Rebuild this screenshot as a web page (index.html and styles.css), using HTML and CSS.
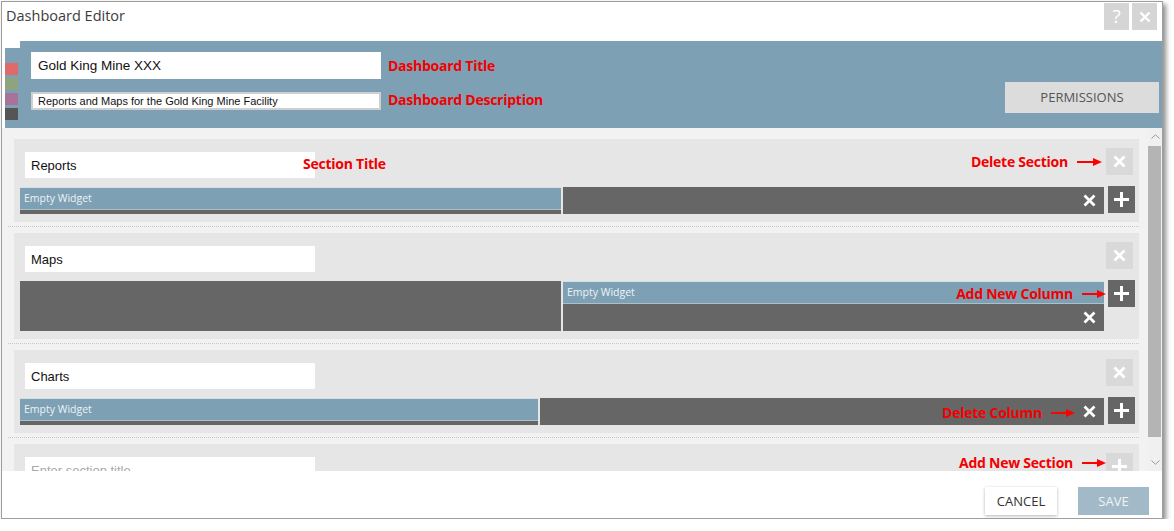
FILE: index.html
```html
<!DOCTYPE html>
<html>
<head>
<meta charset="utf-8">
<title>Dashboard Editor</title>
<link rel="stylesheet" href="styles.css">
</head>
<body>
<div class="dialog">
  <div class="titlebar">
    <div class="title">Dashboard Editor</div>
    <div class="tb-btns">
      <div class="tb-btn tb-help">?</div>
      <div class="tb-btn"><svg width="12" height="12" viewBox="0 0 12 12"><path d="M1.5 1.5L10.5 10.5M10.5 1.5L1.5 10.5" stroke="#fff" stroke-width="2.4" fill="none"/></svg></div>
    </div>
  </div>

  <div class="props">
    <div class="swatch-tab">
      <div class="swatch sw-red"></div>
      <div class="swatch sw-green"></div>
      <div class="swatch sw-purple"></div>
      <div class="swatch sw-dark"></div>
    </div>
    <div class="props-main">
      <div class="props-fields">
        <div class="field-row">
          <div class="inp inp-title">Gold King Mine XXX</div>
          <span class="note-inline">Dashboard Title</span>
        </div>
        <div class="field-row row-desc">
          <div class="inp inp-desc">Reports and Maps for the Gold King Mine Facility</div>
          <span class="note-inline note-desc">Dashboard Description</span>
        </div>
      </div>
      <div class="perm-btn">PERMISSIONS</div>
    </div>
  </div>

  <div class="body">
    <div class="sections">
      <div class="sec-wrap">
        <div class="section">
          <div class="sec-head">
            <div class="sec-inp">Reports</div>
            <div class="icon-btn light"><svg width="13" height="13" viewBox="0 0 13 13"><path d="M1.5 1.5L11.5 11.5M11.5 1.5L1.5 11.5" stroke="#fff" stroke-width="2.8" fill="none"/></svg></div>
          </div>
          <div class="wrow">
            <div class="cols">
              <div class="col w541 h27">
                <div class="widget">Empty Widget</div>
                <div class="rest"></div>
              </div>
              <div class="col grow h27">
                <div class="rest"><svg class="x" width="13" height="13" viewBox="0 0 13 13"><path d="M1.5 1.5L11.5 11.5M11.5 1.5L1.5 11.5" stroke="#fff" stroke-width="2.8" fill="none"/></svg></div>
              </div>
            </div>
            <div class="icon-btn dark add"><svg width="17" height="17" viewBox="0 0 17 17"><path d="M8.5 1V16M1 8.5H16" stroke="#fff" stroke-width="3" fill="none"/></svg></div>
          </div>
          <div class="note note-sectitle">Section Title</div>
          <div class="note note-delsec">Delete Section<svg width="25" height="8" viewBox="0 0 25 8"><path d="M0 4H18" stroke="#f00" stroke-width="2"/><path d="M16 0L25 4L16 8Z" fill="#f00"/></svg></div>
        </div>
      </div>

      <div class="sec-wrap">
        <div class="section">
          <div class="sec-head">
            <div class="sec-inp">Maps</div>
            <div class="icon-btn light"><svg width="13" height="13" viewBox="0 0 13 13"><path d="M1.5 1.5L11.5 11.5M11.5 1.5L1.5 11.5" stroke="#fff" stroke-width="2.8" fill="none"/></svg></div>
          </div>
          <div class="wrow">
            <div class="cols">
              <div class="col w541 h50"></div>
              <div class="col grow h50">
                <div class="widget">Empty Widget</div>
                <div class="rest"><svg class="x" width="13" height="13" viewBox="0 0 13 13"><path d="M1.5 1.5L11.5 11.5M11.5 1.5L1.5 11.5" stroke="#fff" stroke-width="2.8" fill="none"/></svg></div>
              </div>
            </div>
            <div class="icon-btn dark add"><svg width="17" height="17" viewBox="0 0 17 17"><path d="M8.5 1V16M1 8.5H16" stroke="#fff" stroke-width="3" fill="none"/></svg></div>
          </div>
          <div class="note note-addcol">Add New Column<svg width="24" height="8" viewBox="0 0 24 8"><path d="M0 4H17" stroke="#f00" stroke-width="2"/><path d="M15 0L24 4L15 8Z" fill="#f00"/></svg></div>
        </div>
      </div>

      <div class="sec-wrap">
        <div class="section">
          <div class="sec-head">
            <div class="sec-inp">Charts</div>
            <div class="icon-btn light"><svg width="13" height="13" viewBox="0 0 13 13"><path d="M1.5 1.5L11.5 11.5M11.5 1.5L1.5 11.5" stroke="#fff" stroke-width="2.8" fill="none"/></svg></div>
          </div>
          <div class="wrow">
            <div class="cols">
              <div class="col w518 h27">
                <div class="widget">Empty Widget</div>
                <div class="rest"></div>
              </div>
              <div class="col grow h27">
                <div class="rest"><svg class="x" width="13" height="13" viewBox="0 0 13 13"><path d="M1.5 1.5L11.5 11.5M11.5 1.5L1.5 11.5" stroke="#fff" stroke-width="2.8" fill="none"/></svg></div>
              </div>
            </div>
            <div class="icon-btn dark add"><svg width="17" height="17" viewBox="0 0 17 17"><path d="M8.5 1V16M1 8.5H16" stroke="#fff" stroke-width="3" fill="none"/></svg></div>
          </div>
          <div class="note note-delcol">Delete Column<svg width="24" height="8" viewBox="0 0 24 8"><path d="M0 4H17" stroke="#f00" stroke-width="2"/><path d="M15 0L24 4L15 8Z" fill="#f00"/></svg></div>
        </div>
      </div>

      <div class="sec-wrap">
        <div class="section">
          <div class="sec-head">
            <div class="sec-inp placeholder">Enter section title</div>
            <div class="icon-btn light"><svg width="17" height="17" viewBox="0 0 17 17"><path d="M8.5 1V16M1 8.5H16" stroke="#fff" stroke-width="3" fill="none"/></svg></div>
          </div>
          <div class="note note-addsec">Add New Section<svg width="24" height="8" viewBox="0 0 24 8"><path d="M0 4H17" stroke="#f00" stroke-width="2"/><path d="M15 0L24 4L15 8Z" fill="#f00"/></svg></div>
        </div>
      </div>
    </div>

    <div class="scrollbar">
      <div class="sb-btn"><svg width="9" height="5" viewBox="0 0 9 5"><path d="M0.5 4.5L4.5 0.8L8.5 4.5" stroke="#9a9a9a" stroke-width="1" fill="none"/></svg></div>
      <div class="sb-track"><div class="sb-thumb"></div></div>
      <div class="sb-btn"><svg width="9" height="5" viewBox="0 0 9 5"><path d="M0.5 0.5L4.5 4.2L8.5 0.5" stroke="#9a9a9a" stroke-width="1" fill="none"/></svg></div>
    </div>
  </div>

  <div class="footer">
    <div class="btn btn-cancel">CANCEL</div>
    <div class="btn btn-save">SAVE</div>
  </div>
</div>
</body>
</html>
```

FILE: styles.css
```css
* { box-sizing: border-box; }

body {
  margin: 0;
  background: #fff;
  font-family: "Open Sans", "Liberation Sans", sans-serif;
}

.dialog {
  width: 1162px;
  height: 518px;
  margin: 1px 0 0 1px;
  border: 1px solid #9e9e9e;
  box-shadow: 3px 3px 5px rgba(0, 0, 0, 0.45);
  background: #fff;
  display: flex;
  flex-direction: column;
}

/* title bar */
.titlebar {
  height: 39px;
  flex: none;
  display: flex;
  justify-content: space-between;
  padding: 0 5px 0 4px;
}
.title {
  font-size: 14.5px;
  line-height: 27px;
  color: #3c3c3c;
}
.tb-btns {
  display: flex;
  gap: 3px;
  margin-top: 1px;
}
.tb-btn {
  width: 25px;
  height: 27px;
  background: #d5d5d5;
  color: #fff;
  display: flex;
  align-items: center;
  justify-content: center;
}
.tb-help {
  font-size: 19px;
  line-height: 27px;
}

/* dashboard properties */
.props {
  height: 87px;
  flex: none;
  display: flex;
  padding-left: 3px;
}
.swatch-tab {
  width: 15px;
  margin-top: 7px;
  background: #7da0b4;
  padding-top: 15px;
  display: flex;
  flex-direction: column;
  gap: 3px;
}
.swatch {
  width: 13px;
  height: 12px;
}
.sw-red { background: #e06a6a; }
.sw-green { background: #8ea47f; }
.sw-purple { background: #a8729b; }
.sw-dark { background: #555555; }

.props-main {
  flex: 1;
  background: #7da0b4;
  display: flex;
  justify-content: space-between;
  padding: 11px 3px 0 11px;
}
.field-row {
  display: flex;
  align-items: center;
  gap: 7px;
}
.row-desc { margin-top: 13px; }
.inp {
  width: 350px;
  background: #fff;
  font-family: "Liberation Sans", Arial, sans-serif;
  color: #111;
  white-space: nowrap;
}
.inp-title {
  height: 27px;
  font-size: 13.5px;
  line-height: 27px;
  padding-left: 7px;
}
.inp-desc {
  height: 18px;
  font-size: 11px;
  line-height: 14px;
  padding-left: 5px;
  border: 2px solid #cfcfcf;
}
.note-inline {
  color: #f20000;
  font-weight: 700;
  font-size: 14px;
  letter-spacing: -0.25px;
  white-space: nowrap;
}
.note-desc { margin-top: -3px; }
.perm-btn {
  align-self: flex-end;
  margin-bottom: 15px;
  width: 154px;
  height: 31px;
  background: #dcdcdc;
  color: #555;
  font-size: 13px;
  line-height: 31px;
  text-align: center;
}

/* scrollable body */
.body {
  height: 343px;
  flex: none;
  display: flex;
  background: #f2f2f2;
  overflow: hidden;
}
.sections {
  flex: 1;
  padding: 11px 9px 0 6px;
  overflow: hidden;
}
.sec-wrap {
  padding: 0 0 4px 6px;
  border-bottom: 1px dotted #c6c6c6;
  margin-bottom: 6px;
}
.section {
  position: relative;
  background: #e6e6e6;
  padding: 0 4px 8px 6px;
}
.sec-head {
  display: flex;
  align-items: flex-start;
}
.sec-inp {
  width: 290px;
  height: 26px;
  margin: 13px 0 0 5px;
  background: #fff;
  padding-left: 6px;
  font-family: "Liberation Sans", Arial, sans-serif;
  font-size: 13px;
  line-height: 27px;
  color: #111;
}
.sec-inp.placeholder { color: #a8a8a8; }

.icon-btn {
  width: 27px;
  height: 27px;
  display: flex;
  align-items: center;
  justify-content: center;
  flex: none;
}
.icon-btn.light {
  background: #d9d9d9;
  margin: 9px 2px 0 auto;
}
.icon-btn.dark { background: #666; }
.icon-btn.add {
  margin: -1px 0 0 4px;
}

/* widget rows */
.wrow {
  display: flex;
  align-items: flex-start;
  margin-top: 9px;
}
.cols {
  flex: 1;
  display: flex;
  gap: 2px;
}
.col {
  background: #666;
  display: flex;
  flex-direction: column;
}
.w541 { width: 541px; flex: none; }
.w518 { width: 518px; flex: none; }
.grow { flex: 1; }
.h27 { height: 27px; }
.h50 { height: 50px; }
.widget {
  height: 23px;
  background: #7da0b4;
  border-top: 1px solid #d3e0e7;
  border-bottom: 1px solid #aebfc8;
  color: #eef3f6;
  font-size: 10.5px;
  line-height: 21px;
  padding-left: 4px;
  white-space: nowrap;
}
.rest {
  flex: 1;
  display: flex;
  align-items: center;
  justify-content: flex-end;
  padding-right: 8px;
}

/* annotations laid over the editor */
.note {
  position: absolute;
  height: 18px;
  display: flex;
  align-items: center;
  gap: 9px;
  color: #f20000;
  font-weight: 700;
  font-size: 14px;
  letter-spacing: -0.25px;
  line-height: 18px;
  white-space: nowrap;
}
.note-sectitle { left: 289px; top: 16px; }
.note-delsec { right: 37px; top: 14px; }
.note-addcol { right: 33px; top: 52px; }
.note-delcol { right: 64px; top: 54px; }
.note-addsec { right: 33px; top: 10px; }

/* scrollbar */
.scrollbar {
  width: 14px;
  flex: none;
  display: flex;
  flex-direction: column;
  background: #f0f0f0;
}
.sb-btn {
  height: 17px;
  display: flex;
  align-items: center;
  justify-content: center;
}
.sb-track {
  flex: 1;
  padding-top: 1px;
}
.sb-thumb {
  height: 291px;
  margin: 0 1px 0 0;
  background: #b4b4b4;
}

/* footer */
.footer {
  flex: 1;
  display: flex;
  justify-content: flex-end;
  gap: 21px;
  padding: 16px 13px 0 0;
}
.btn {
  height: 28px;
  font-size: 13px;
  line-height: 28px;
  text-align: center;
}
.btn-cancel {
  width: 72px;
  background: #fff;
  color: #333;
  box-shadow: 0 1px 3px rgba(0, 0, 0, 0.3);
}
.btn-save {
  width: 71px;
  background: #a2bac8;
  color: #eef3f6;
}
```
